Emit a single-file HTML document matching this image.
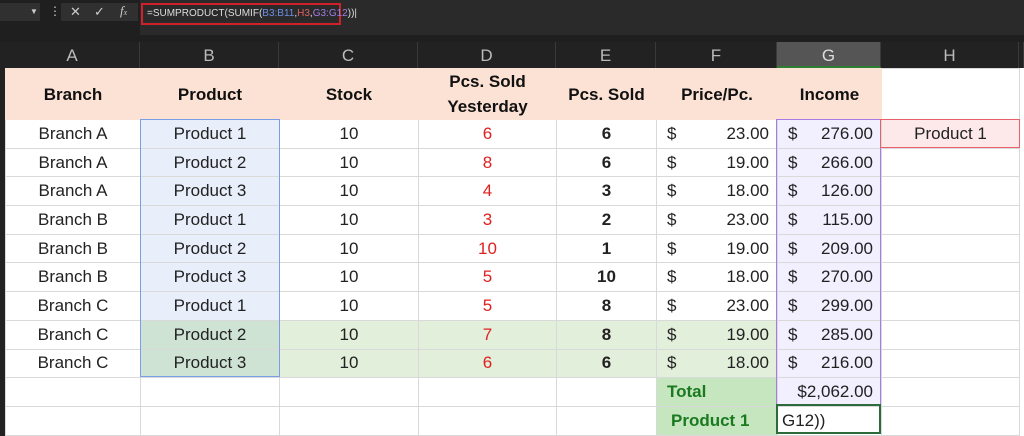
<!DOCTYPE html>
<html><head><meta charset="utf-8"><style>
*{margin:0;padding:0;box-sizing:border-box}
body{width:1024px;height:436px;overflow:hidden;background:#fff;font-family:"Liberation Sans",Carlito,sans-serif;position:relative}
.top{position:absolute;left:0;top:0;width:1024px;height:42px;background:#1f1f1f}
.fa{position:absolute;left:140px;top:0;width:884px;height:35px;background:#2a2a2a}
.ch{position:absolute;top:42px;height:26px;background:#222;color:#bbb;font-size:17px;text-align:center;line-height:28px;border-right:1px solid #3a3a3a}
.fbox{position:absolute;left:141px;top:3px;width:200px;height:22px;border:2px solid #d0202a;color:#ddd;font-size:10px;line-height:18px;padding-left:4px;white-space:nowrap}
.ic{position:absolute;top:5px;color:#ccc;font-size:13px}
table{position:absolute;left:5px;top:68px;border-collapse:collapse;table-layout:fixed}
td{border:1px solid #d9d9d9;height:28.7px;font-size:17px;text-align:center;color:#222;padding:0;white-space:nowrap}
tr.h td{height:51px;background:#fbe2d5;font-weight:bold;border-color:#fbe2d5;color:#111;line-height:25px}
tr.h td.w{background:#fff;border-color:#d9d9d9}
.r{color:#e02020}.b{font-weight:bold}
.pb{background:#e8eefa}.pg{background:#cfe3d5}.g{background:#e2efda}.gi{background:#f2efff}
.m{display:flex;justify-content:space-between;padding:0 8px 0 10px}
.gt{background:#c6e6c0;color:#1a7a20;font-weight:bold;text-align:left;padding-left:10px}
.sel{position:absolute;pointer-events:none}
</style></head><body>
<div class="top"></div>
<div class="fa"></div>
<div style="position:absolute;left:0;top:3px;width:40px;height:18px;background:#303030"></div>
<div style="position:absolute;left:61px;top:3px;width:77px;height:18px;background:#303030"></div>
<div class="ic" style="left:30px;font-size:8px;top:7px">▼</div>
<div class="ic" style="left:49px;font-size:12px;top:4px">⋮</div>
<div class="ic" style="left:70px;top:4px">✕</div>
<div class="ic" style="left:94px;top:4px">✓</div>
<div class="ic" style="left:120px;top:3px;font-style:italic;font-family:'Liberation Serif',serif">f<span style="font-size:8px">x</span></div>
<div class="fbox">=SUMPRODUCT(SUMIF(<span style="color:#6d8fe6">B3:B11</span>,<span style="color:#e06060">H3</span>,<span style="color:#a07de0">G3:G12</span>))|</div>
<div style="position:absolute;left:0;top:42px;width:5px;height:394px;background:#222"></div>
<div class="ch" style="left:5px;width:135px">A</div>
<div class="ch" style="left:140px;width:139px">B</div>
<div class="ch" style="left:279px;width:139px">C</div>
<div class="ch" style="left:418px;width:138px">D</div>
<div class="ch" style="left:556px;width:100px">E</div>
<div class="ch" style="left:656px;width:121px">F</div>
<div class="ch" style="left:777px;width:104px;background:#555;border-bottom:2px solid #2e7d32;color:#ddd">G</div>
<div class="ch" style="left:881px;width:138px">H</div>
<div class="ch" style="left:1019px;width:5px"></div>
<table>
<colgroup><col style="width:135px"><col style="width:139px"><col style="width:139px"><col style="width:138px"><col style="width:100px"><col style="width:121px"><col style="width:104px"><col style="width:138px"></colgroup>
<tr class="h"><td>Branch</td><td>Product</td><td>Stock</td><td>Pcs. Sold<br>Yesterday</td><td>Pcs. Sold</td><td>Price/Pc.</td><td>Income</td><td class="w"></td></tr>
<tr><td>Branch A</td><td class="pb">Product 1</td><td>10</td><td class="r">6</td><td class="b">6</td><td><div class="m"><span>$</span><span>23.00</span></div></td><td class="gi"><div class="m"><span>$</span><span>276.00</span></div></td><td style="background:#fde9ea">Product 1</td></tr>
<tr><td>Branch A</td><td class="pb">Product 2</td><td>10</td><td class="r">8</td><td class="b">6</td><td><div class="m"><span>$</span><span>19.00</span></div></td><td class="gi"><div class="m"><span>$</span><span>266.00</span></div></td><td></td></tr>
<tr><td>Branch A</td><td class="pb">Product 3</td><td>10</td><td class="r">4</td><td class="b">3</td><td><div class="m"><span>$</span><span>18.00</span></div></td><td class="gi"><div class="m"><span>$</span><span>126.00</span></div></td><td></td></tr>
<tr><td>Branch B</td><td class="pb">Product 1</td><td>10</td><td class="r">3</td><td class="b">2</td><td><div class="m"><span>$</span><span>23.00</span></div></td><td class="gi"><div class="m"><span>$</span><span>115.00</span></div></td><td></td></tr>
<tr><td>Branch B</td><td class="pb">Product 2</td><td>10</td><td class="r">10</td><td class="b">1</td><td><div class="m"><span>$</span><span>19.00</span></div></td><td class="gi"><div class="m"><span>$</span><span>209.00</span></div></td><td></td></tr>
<tr><td>Branch B</td><td class="pb">Product 3</td><td>10</td><td class="r">5</td><td class="b">10</td><td><div class="m"><span>$</span><span>18.00</span></div></td><td class="gi"><div class="m"><span>$</span><span>270.00</span></div></td><td></td></tr>
<tr><td>Branch C</td><td class="pb">Product 1</td><td>10</td><td class="r">5</td><td class="b">8</td><td><div class="m"><span>$</span><span>23.00</span></div></td><td class="gi"><div class="m"><span>$</span><span>299.00</span></div></td><td></td></tr>
<tr><td>Branch C</td><td class="pg">Product 2</td><td class="g">10</td><td class="g r">7</td><td class="g b">8</td><td class="g"><div class="m"><span>$</span><span>19.00</span></div></td><td class="gi"><div class="m"><span>$</span><span>285.00</span></div></td><td></td></tr>
<tr><td>Branch C</td><td class="pg">Product 3</td><td class="g">10</td><td class="g r">6</td><td class="g b">6</td><td class="g"><div class="m"><span>$</span><span>18.00</span></div></td><td class="gi"><div class="m"><span>$</span><span>216.00</span></div></td><td></td></tr>
<tr><td></td><td></td><td></td><td></td><td></td><td class="gt">Total</td><td class="gi" style="text-align:right;padding-right:8px">$2,062.00</td><td></td></tr>
<tr><td></td><td></td><td></td><td></td><td></td><td class="gt" style="padding-left:14px">Product 1</td><td style="text-align:left;padding-left:4px">G12))</td><td></td></tr>
</table>
<div class="sel" style="left:140px;top:119px;width:140px;height:258px;border:1.5px solid #7a9ee6"></div>
<div class="sel" style="left:776px;top:119px;width:105px;height:287px;border:1.5px solid #a67ce8"></div>
<div class="sel" style="left:880px;top:119px;width:140px;height:29px;border:1.5px solid #e8606a"></div>
<div class="sel" style="left:776px;top:404px;width:105px;height:30px;border:2px solid #2e6b3a"></div>
</body></html>
